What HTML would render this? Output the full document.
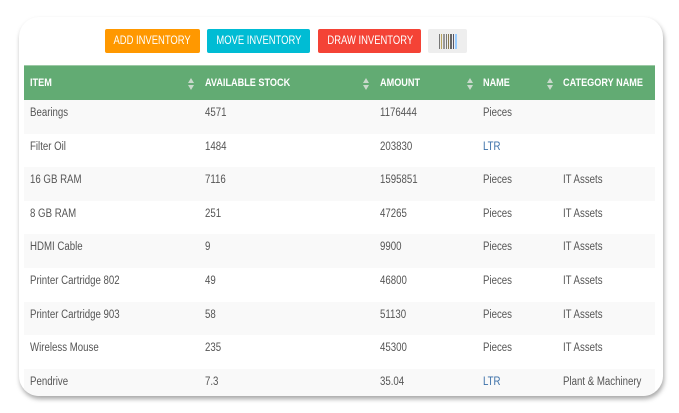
<!DOCTYPE html>
<html><head><style>
*{margin:0;padding:0;box-sizing:border-box}
body{width:679px;height:413px;background:#fff;font-family:"Liberation Sans",sans-serif;overflow:hidden;position:relative}
.card{position:absolute;left:19px;top:17px;width:644px;height:379px;border-radius:20px;background:#fff;box-shadow:1px 3px 5px rgba(0,0,0,.35);overflow:hidden}
.btn{position:absolute;top:12px;height:24px;color:#fff;font-size:11.5px;line-height:24px;border-radius:2px;white-space:nowrap;overflow:hidden}
.btn i{font-style:normal;display:inline-block;transform:scaleX(.82);transform-origin:center}
.tbl{position:absolute;left:5px;top:48px;width:631px}
.hd{height:35px;background:#62ab73;color:#fff;font-weight:bold;font-size:11px;position:relative;border-top:1px solid #9cc9a5}
.hd span,.r span{position:absolute;white-space:nowrap;transform:scaleX(.84);transform-origin:left}
.hd span{top:11px;transform:scaleX(.83)}
.si{position:absolute;top:12px;width:6px;height:12px}
.r{height:33.6px;position:relative;font-size:11.5px;color:#555}
.r span{top:7px}
.blue{color:#3a6fa8}
</style></head><body>
<div class="card">
<div class="btn" style="left:86px;width:95px;background:#ff9800;text-align:center"><i>ADD INVENTORY</i></div>
<div class="btn" style="left:188px;width:103px;background:#00bcd4;text-align:center"><i>MOVE INVENTORY</i></div>
<div class="btn" style="left:299px;width:103px;background:#f44336;text-align:center"><i>DRAW INVENTORY</i></div>
<div class="btn" style="left:409px;width:39px;background:#eee;text-align:center">
<svg width="18" height="15" style="margin-top:5px" viewBox="0 0 18 15"><g fill="#777"><rect x="0" width="1" height="15"/><rect x="2" width="1" height="15" fill="#b9a560"/><rect x="4" width="2" height="15" fill="#999"/><rect x="7" width="1" height="15"/><rect x="9" width="1" height="15" fill="#8a7a50"/><rect x="11" width="2" height="15" fill="#666"/><rect x="14" width="1" height="15" fill="#556"/><rect x="16" width="2" height="15" fill="#9cf"/></g></svg></div>
<div class="tbl">
<div class="hd">
<span style="left:6px">ITEM</span>
<svg class="si" style="left:164px" viewBox="0 0 6 12"><path d="M3 0L6 5H0z M3 12L6 7H0z" fill="#c9d9cc"/></svg>
<span style="left:181px">AVAILABLE STOCK</span>
<svg class="si" style="left:339px" viewBox="0 0 6 12"><path d="M3 0L6 5H0z M3 12L6 7H0z" fill="#c9d9cc"/></svg>
<span style="left:356px">AMOUNT</span>
<svg class="si" style="left:443px" viewBox="0 0 6 12"><path d="M3 0L6 5H0z M3 12L6 7H0z" fill="#c9d9cc"/></svg>
<span style="left:459px">NAME</span>
<svg class="si" style="left:523px" viewBox="0 0 6 12"><path d="M3 0L6 5H0z M3 12L6 7H0z" fill="#c9d9cc"/></svg>
<span style="left:539px">CATEGORY NAME</span>
</div>
<div>
<div class="r" style="background:#f9f9f9"><span style="left:6px">Bearings</span><span style="left:181px">4571</span><span style="left:356px">1176444</span><span style="left:459px">Pieces</span></div>
<div class="r" style="background:#fff"><span style="left:6px">Filter Oil</span><span style="left:181px">1484</span><span style="left:356px">203830</span><span class="blue" style="left:459px">LTR</span></div>
<div class="r" style="background:#f9f9f9"><span style="left:6px">16 GB RAM</span><span style="left:181px">7116</span><span style="left:356px">1595851</span><span style="left:459px">Pieces</span><span style="left:539px">IT Assets</span></div>
<div class="r" style="background:#fff"><span style="left:6px">8 GB RAM</span><span style="left:181px">251</span><span style="left:356px">47265</span><span style="left:459px">Pieces</span><span style="left:539px">IT Assets</span></div>
<div class="r" style="background:#f9f9f9"><span style="left:6px">HDMI Cable</span><span style="left:181px">9</span><span style="left:356px">9900</span><span style="left:459px">Pieces</span><span style="left:539px">IT Assets</span></div>
<div class="r" style="background:#fff"><span style="left:6px">Printer Cartridge 802</span><span style="left:181px">49</span><span style="left:356px">46800</span><span style="left:459px">Pieces</span><span style="left:539px">IT Assets</span></div>
<div class="r" style="background:#f9f9f9"><span style="left:6px">Printer Cartridge 903</span><span style="left:181px">58</span><span style="left:356px">51130</span><span style="left:459px">Pieces</span><span style="left:539px">IT Assets</span></div>
<div class="r" style="background:#fff"><span style="left:6px">Wireless Mouse</span><span style="left:181px">235</span><span style="left:356px">45300</span><span style="left:459px">Pieces</span><span style="left:539px">IT Assets</span></div>
<div class="r" style="background:#f9f9f9"><span style="left:6px">Pendrive</span><span style="left:181px">7.3</span><span style="left:356px">35.04</span><span class="blue" style="left:459px">LTR</span><span style="left:539px">Plant &amp; Machinery</span></div>
</div>
</div>
</div>
</body></html>
